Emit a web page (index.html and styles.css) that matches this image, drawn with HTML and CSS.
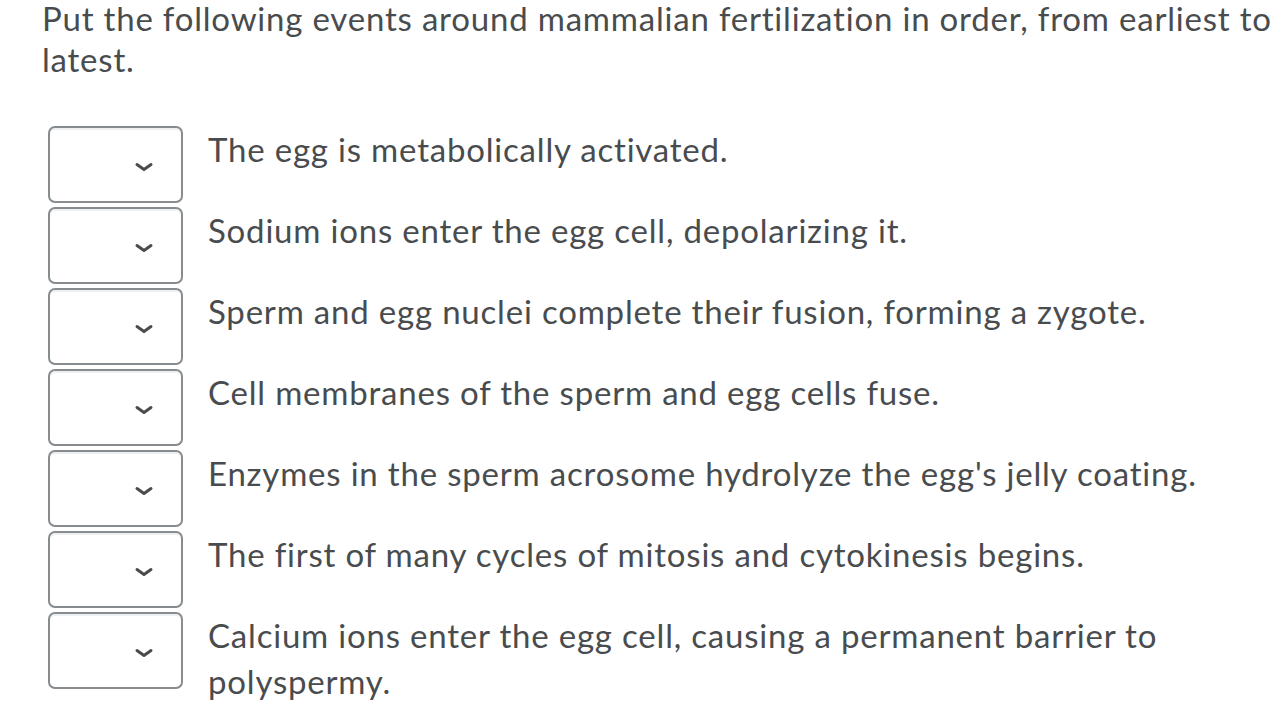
FILE: index.html
```html
<!DOCTYPE html>
<html>
<head>
<meta charset="utf-8">
<link rel="stylesheet" href="styles.css">
</head>
<body>
<div class="page">
  <p class="question">Put the following events around mammalian fertilization in order, from earliest to latest.</p>
  <div class="items">
    <div class="item"><div class="select"><svg class="chev" width="18" height="10" viewBox="0 0 18 10"><path d="M2 2.5 L9 7.5 L16 2.5" fill="none" stroke="#494c4e" stroke-width="3" stroke-linecap="round" stroke-linejoin="round"/></svg></div><div class="label">The egg is metabolically activated.</div></div>
    <div class="item"><div class="select"><svg class="chev" width="18" height="10" viewBox="0 0 18 10"><path d="M2 2.5 L9 7.5 L16 2.5" fill="none" stroke="#494c4e" stroke-width="3" stroke-linecap="round" stroke-linejoin="round"/></svg></div><div class="label">Sodium ions enter the egg cell, depolarizing it.</div></div>
    <div class="item"><div class="select"><svg class="chev" width="18" height="10" viewBox="0 0 18 10"><path d="M2 2.5 L9 7.5 L16 2.5" fill="none" stroke="#494c4e" stroke-width="3" stroke-linecap="round" stroke-linejoin="round"/></svg></div><div class="label">Sperm and egg nuclei complete their fusion, forming a zygote.</div></div>
    <div class="item"><div class="select"><svg class="chev" width="18" height="10" viewBox="0 0 18 10"><path d="M2 2.5 L9 7.5 L16 2.5" fill="none" stroke="#494c4e" stroke-width="3" stroke-linecap="round" stroke-linejoin="round"/></svg></div><div class="label">Cell membranes of the sperm and egg cells fuse.</div></div>
    <div class="item"><div class="select"><svg class="chev" width="18" height="10" viewBox="0 0 18 10"><path d="M2 2.5 L9 7.5 L16 2.5" fill="none" stroke="#494c4e" stroke-width="3" stroke-linecap="round" stroke-linejoin="round"/></svg></div><div class="label">Enzymes in the sperm acrosome hydrolyze the egg's jelly coating.</div></div>
    <div class="item"><div class="select"><svg class="chev" width="18" height="10" viewBox="0 0 18 10"><path d="M2 2.5 L9 7.5 L16 2.5" fill="none" stroke="#494c4e" stroke-width="3" stroke-linecap="round" stroke-linejoin="round"/></svg></div><div class="label">The first of many cycles of mitosis and cytokinesis begins.</div></div>
    <div class="item"><div class="select"><svg class="chev" width="18" height="10" viewBox="0 0 18 10"><path d="M2 2.5 L9 7.5 L16 2.5" fill="none" stroke="#494c4e" stroke-width="3" stroke-linecap="round" stroke-linejoin="round"/></svg></div><div class="label">Calcium ions enter the egg cell, causing a permanent barrier to polyspermy.</div></div>
  </div>
</div>
</body>
</html>
```
FILE: styles.css
```css
html, body {
  margin: 0;
  padding: 0;
  background: #ffffff;
}
body {
  font-family: Lato, "Liberation Sans", sans-serif;
  color: #494c4e;
}
.page {
  padding: 0 0 0 42px;
}
.question {
  margin: -2px 0 0 0;
  font-size: 33px;
  line-height: 41px;
  letter-spacing: 0.8px;
  width: 1240px;
}
.items {
  display: flex;
  flex-direction: column;
  gap: 4px;
  margin-top: 46px;
  padding-left: 6px;
}
.item {
  display: flex;
  align-items: flex-start;
  gap: 25px;
}
.select {
  flex: none;
  box-sizing: border-box;
  width: 135px;
  height: 77px;
  border: 2px solid #868c90;
  border-radius: 7px;
  background: #fff;
  box-shadow: inset 0 2px 0 #eef0f1;
  position: relative;
}
.chev {
  position: absolute;
  left: 85px;
  top: 34px;
}
.label {
  flex: 1;
  font-size: 33px;
  line-height: 46px;
  letter-spacing: 0.8px;
}
```
